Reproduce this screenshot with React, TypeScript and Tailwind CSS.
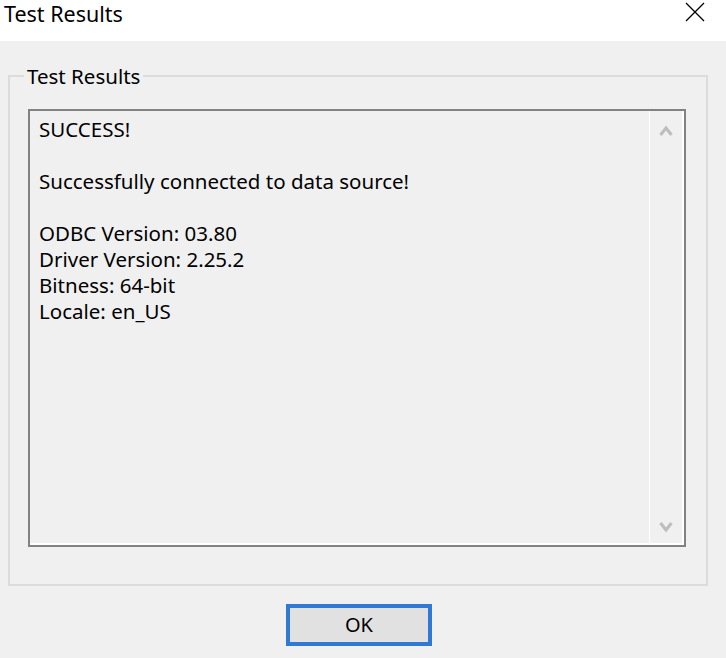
import React from "react";

const font = { fontFamily: '"Noto Sans", "Open Sans", sans-serif' };

export default function App() {
  const lines = [
    "SUCCESS!",
    "",
    "Successfully connected to data source!",
    "",
    "ODBC Version: 03.80",
    "Driver Version: 2.25.2",
    "Bitness: 64-bit",
    "Locale: en_US",
  ];
  return (
    <div
      className="w-[726px] h-[658px] bg-[#f0f0f0] overflow-hidden flex flex-col text-[#000]"
      style={font}
    >
      <div className="h-[41px] bg-white flex items-start justify-between shrink-0">
        <div className="pl-[4px] pt-[0px] text-[21.5px] leading-[27px]">Test Results</div>
        <svg width="22" height="22" viewBox="0 0 22 22" className="mr-[20px] mt-[1px]">
          <path d="M2 2 L20 20 M20 2 L2 20" stroke="#000" strokeWidth="1.3" fill="none" />
        </svg>
      </div>
      <div className="pl-[8px] pt-[22px]">
        <fieldset className="w-[700px] h-[523px] border-2 border-[#dcdcdc] m-0 p-0 min-w-0">
          <legend className="ml-[14px] px-[3px] text-[20.5px] leading-[26px]">Test Results</legend>
          <div className="ml-[18px] mt-[20px] w-[658px] h-[438px] border-2 border-[#828282] flex">
            <div className="flex-1 pl-[9px] pt-[5px] text-[20.5px] leading-[26px] border-b-2 border-white">
              {lines.map((l, i) => (
                <div key={i} className="h-[26px] whitespace-pre">
                  {l}
                </div>
              ))}
            </div>
            <div className="w-[35px] border-l border-white border-r-2 border-b-2 flex flex-col items-center justify-between pt-[14px] pb-[10px]">
              <svg width="14" height="12" viewBox="0 0 14 12">
                <path d="M1.5 10 L7 3 L12.5 10" stroke="#bdbdbd" strokeWidth="3" fill="none" strokeLinejoin="miter" />
              </svg>
              <svg width="14" height="12" viewBox="0 0 14 12">
                <path d="M1.5 2 L7 9 L12.5 2" stroke="#bdbdbd" strokeWidth="3" fill="none" strokeLinejoin="miter" />
              </svg>
            </div>
          </div>
        </fieldset>
      </div>
      <div className="flex justify-center pt-[18px]">
        <button className="ml-[-8px] w-[146px] h-[42px] border-4 border-[#2f78d4] bg-[#e1e1e1] text-[20px] leading-[24px] flex items-center justify-center">
          OK
        </button>
      </div>
    </div>
  );
}
